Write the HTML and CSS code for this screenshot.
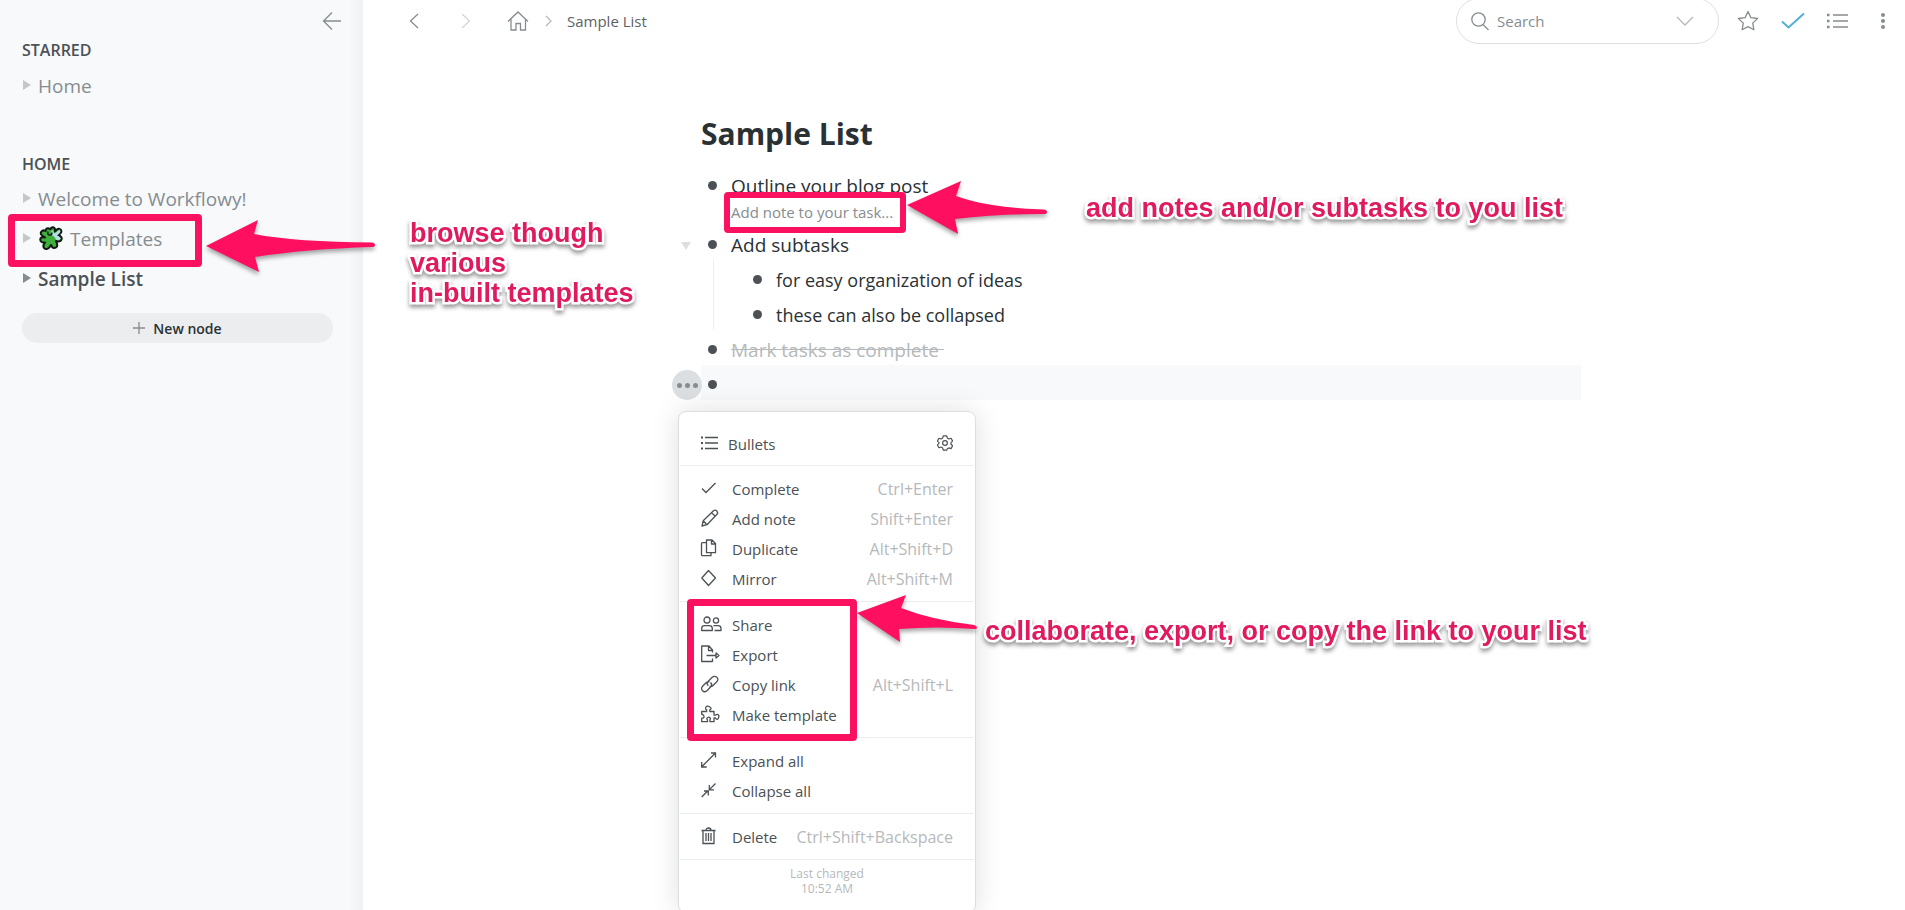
FILE: index.html
```html
<!DOCTYPE html>
<html lang="en">
<head>
<meta charset="utf-8">
<title>Sample List</title>
<link rel="stylesheet" href="styles.css">
</head>
<body>
<div class="app">
  <aside class="sidebar">
    <div class="sidebar-top">
      <button class="icon-btn" aria-label="Close sidebar">
        <svg width="20" height="20" viewBox="0 0 20 20"><path d="M19 10H2M10 1.500L1.500 10l8.500 8.500"/></svg>
      </button>
    </div>
    <h2 class="side-title">STARRED</h2>
    <nav class="side-nav starred" aria-label="Starred">
      <a class="side-link" href="#home"><span class="tri"></span>Home</a>
    </nav>
    <h2 class="side-title">HOME</h2>
    <nav class="side-nav" aria-label="Home">
      <a class="side-link" href="#welcome"><span class="tri"></span>Welcome to Workflowy!</a>
      <a class="side-link" href="#templates"><span class="tri"></span>
        <svg class="puzzle" width="24" height="24" viewBox="0 0 24 24"><path fill="#3fae3c" stroke="#101a12" stroke-width="2" stroke-linejoin="round" d="M6.500 5Q7 1.500 10 2.500Q12 4 12 2Q14.500 0 16 3L16 5.500Q19 1.500 21.500 3.500Q24 6.500 19 9Q23.500 10.500 22.500 13.500Q21.500 16.500 17 15Q19.500 20 17 21.500Q14 23.500 12 19Q9 24.500 5.500 22.500Q3 20 6 16.500Q1.500 17 1.200 13.500Q1.500 10.500 6 11.500Q0 8.500 2.500 5.500Q4 3.500 6.500 5Z"/><path fill="#b9dcea" stroke="none" d="M13 4l2.500 3.500q2.500-1.500 5-4q2.500 2.500-2.500 6q4 1.500 3.500 3.500q-2 2-4.500.5q-1-3-3.500-4q-2-3-.5-5.500z"/><path fill="none" stroke="#101a12" stroke-width="1.500" d="M9 5.500q-1 3.500 2 3.500q2 0 2-2.500"/></svg>
        Templates</a>
      <a class="side-link current" href="#sample"><span class="tri"></span>Sample List</a>
    </nav>
    <button class="new-node"><svg width="12" height="12" viewBox="0 0 12 12"><path d="M6 0v12M0 6h12"/></svg>New node</button>
  </aside>

  <main class="main">
    <header class="topbar">
      <button class="icon-btn back" aria-label="Back"><svg width="10" height="16" viewBox="0 0 10 16"><path d="M9 1L1.500 8 9 15"/></svg></button>
      <button class="icon-btn forward" aria-label="Forward"><svg width="10" height="16" viewBox="0 0 10 16"><path d="M1 1l7.500 7L1 15"/></svg></button>
      <nav class="crumbs" aria-label="Breadcrumb">
        <a href="#home" aria-label="Home"><svg width="22" height="20" viewBox="0 0 22 20"><path d="M1 10.500L11 1l10 9.500M4 8v11h5v-6.500h4.500V19h5V8"/></svg></a>
        <svg class="sep" width="7" height="12" viewBox="0 0 7 12"><path d="M1 1l5 5-5 5"/></svg>
        <a href="#sample">Sample List</a>
      </nav>
      <label class="search">
        <svg width="18" height="19" viewBox="0 0 18 19"><circle cx="7.500" cy="7.500" r="6.700"/><path d="M12 12.500l5.500 5.500"/></svg>
        <input type="text" placeholder="Search" aria-label="Search">
        <svg class="caret" width="18" height="10" viewBox="0 0 18 10"><path d="M1 1l8 8 8-8"/></svg>
      </label>
      <div class="actions">
        <button class="icon-btn" aria-label="Star"><svg width="22" height="22" viewBox="0 0 22 22"><path stroke-linejoin="round" d="M11 1.500l2.900 6.100 6.700.9-4.900 4.600 1.200 6.700L11 16.600l-5.900 3.200 1.200-6.700L1.400 8.500l6.700-.9z"/></svg></button>
        <button class="icon-btn done" aria-label="Show completed"><svg width="24" height="18" viewBox="0 0 24 18"><path d="M1 9.500l6.500 6L23 1.500"/></svg></button>
        <button class="icon-btn" aria-label="List view"><svg width="21" height="16" viewBox="0 0 21 16"><path d="M6 2h15M6 8h15M6 14h15"/><path stroke-width="2.500" d="M0 2h2.500M0 8h2.500M0 14h2.500"/></svg></button>
        <button class="icon-btn kebab" aria-label="More"><svg width="4" height="18" viewBox="0 0 4 18"><circle cx="2" cy="3" r="2"/><circle cx="2" cy="9" r="2"/><circle cx="2" cy="15" r="2"/></svg></button>
      </div>
    </header>

    <section class="page">
      <h1 class="page-title">Sample List</h1>
      <ul class="outline">
        <li><div class="row"><span class="dot"></span>Outline your blog post</div><p class="note">Add note to your task...</p></li>
        <li><div class="row"><span class="fold"></span><span class="dot"></span>Add subtasks</div>
          <ul class="children">
            <li><div class="row"><span class="dot"></span>for easy organization of ideas</div></li>
            <li><div class="row"><span class="dot"></span>these can also be collapsed</div></li>
          </ul>
        </li>
        <li><div class="row"><span class="dot"></span><s>Mark tasks as complete&nbsp;</s></div></li>
        <li class="active"><div class="row"><span class="dot"></span></div>
          <button class="more" aria-label="Item menu"><i></i><i></i><i></i></button>
          <div class="menu">
            <div class="group head">
              <button class="item"><svg width="18" height="14" viewBox="0 0 18 14"><path d="M4 1.500h13M4 7h13M4 12.500h13"/><path stroke-width="2" d="M0 1.500h2M0 7h2M0 12.500h2"/></svg>Bullets</button>
              <button class="gear" aria-label="Settings"><svg width="16" height="18" viewBox="0 0 18 18"><path stroke-linejoin="round" d="M7 1h4l.6 2.500 1.800 1 2.400-.8 1.800 3.200-1.900 1.700v1.800l1.900 1.700-1.800 3.200-2.400-.8-1.800 1L11 17H7l-.6-2.500-1.800-1-2.400.8-1.800-3.200 1.900-1.700V8.600L.4 6.900l1.800-3.200 2.400.8 1.800-1z"/><circle cx="9" cy="9" r="2.700"/></svg></button>
            </div>
            <div class="group">
              <button class="item"><svg width="18" height="18" viewBox="0 0 18 18"><path d="M1 9.500l4 4L14.500 4"/></svg>Complete<kbd>Ctrl+Enter</kbd></button>
              <button class="item"><svg width="18" height="18" viewBox="0 0 18 18"><path stroke-linejoin="round" d="M1 17l1.200-5.200L12.500 1.700q1.800-1.300 3.300.3t.2 3.300L6 15.700zM2.200 11.800l3.800 3.900M10.500 3.600l3.700 3.700"/></svg>Add note<kbd>Shift+Enter</kbd></button>
              <button class="item"><svg width="18" height="18" viewBox="0 0 18 18"><path stroke-linejoin="round" d="M5.500 1H11l3.500 3.500v9.200h-9zM10.500 1v4h4M5.500 3.700H1.500q-1 0-1 1v11q0 1 1 1h8.500v-3"/></svg>Duplicate<kbd>Alt+Shift+D</kbd></button>
              <button class="item"><svg width="18" height="18" viewBox="0 0 18 18"><path stroke-linejoin="round" d="M7.500 1.500L14.500 9l-7 7.500L.8 9z"/></svg>Mirror<kbd>Alt+Shift+M</kbd></button>
            </div>
            <div class="group">
              <button class="item"><svg class="wide" width="21" height="18" viewBox="0 0 21 18"><circle cx="6" cy="5" r="3"/><circle cx="15" cy="5.500" r="2.600"/><path stroke-linejoin="round" d="M.7 15.500v-2q0-2.800 3-2.800h4.600q3 0 3 2.800v2zM12.500 10.700h4.500q3 0 3 2.800v2h-6.500"/></svg>Share</button>
              <button class="item"><svg class="wide" width="21" height="18" viewBox="0 0 21 18"><path stroke-linejoin="round" d="M11.500 7.500V5L8 1H.7v15.500h10.800v-3M7.500 1v4.500h4M5.500 10.500h9.500M15 8l3 2.500-3 2.500z"/></svg>Export</button>
              <button class="item"><svg width="18" height="18" viewBox="0 0 18 18"><path d="M7.300 10.800Q5 8.500 7 6.500L11 2.500Q13.500.300 15.800 2.300T15.500 7l-3.500 3.500Q10.500 12 8.500 11.500M9.500 7.500q2.300 2 .3 4.300L6 15.700q-2.500 2-4.500 0T1.800 11L5 7.800Q6.500 6.500 8.500 7"/></svg>Copy link<kbd>Alt+Shift+L</kbd></button>
              <button class="item"><svg class="wide" width="21" height="18" viewBox="0 0 21 18"><path stroke-linejoin="round" d="M.7 6.500h5V4.800Q3.800 3.800 5 2t3.800 0 0 2.800v1.700H13v3.700h1.500q1.500-1.400 2.800-.5t0 3.500-2.800-.2H13v3.700H9v-2q1-1 0-2t-2.500 0 0 2v2H.7v-3.500H2q1.700-.9.800-2.400T.7 9z"/></svg>Make template</button>
            </div>
            <div class="group">
              <button class="item"><svg width="18" height="18" viewBox="0 0 18 18"><path d="M1 15.500L14 2.500M10 2h4.500v4.500M.7 11v5h5"/></svg>Expand all</button>
              <button class="item"><svg width="18" height="18" viewBox="0 0 18 18"><path d="M.7 16l6-6M14.500 2.500l-6 6M3 10h4.300v4.500M8.300 4v4.800H13"/></svg>Collapse all</button>
            </div>
            <div class="group">
              <button class="item"><svg width="18" height="18" viewBox="0 0 18 18"><path d="M.5 3.500h14M5 3.500q0-2.500 2.500-2.500T10 3.500M2 3.500V16.500h11V3.500M5 6v8M7.500 6v8M10 6v8"/></svg>Delete<kbd>Ctrl+Shift+Backspace</kbd></button>
            </div>
            <p class="changed">Last changed<br>10:52 AM</p>
          </div>
        </li>
      </ul>
    </section>
  </main>

  <div class="frame frame-templates"></div>
  <div class="frame frame-note"></div>
  <div class="frame frame-share"></div>
  <svg class="arrow arrow-templates" width="170" height="54" viewBox="0 0 170 54"><path d="M0 27L52 1L48 15Q90 23 166 23.500Q169 24 169 26T166 28Q100 30 49 38L53 53Z"/></svg>
  <svg class="arrow arrow-note" width="141" height="54" viewBox="0 0 141 54"><path d="M0 25L54 1L49 16Q82 28 137 29.500Q140 30 140 32T137 34Q90 34 48 39L51 54Z"/></svg>
  <svg class="arrow arrow-share" width="121" height="48" viewBox="0 0 121 48"><path d="M0 18L49 0L44 13Q75 25 117 30Q120 31 120 32.500T117 34Q80 31 42 34L43 47Z"/></svg>
  <p class="callout callout-templates">browse though<br>various<br>in-built templates</p>
  <p class="callout callout-note">add notes and/or subtasks to you list</p>
  <p class="callout callout-share">collaborate, export, or copy the link to your list</p>
</div>
</body>
</html>
```
FILE: styles.css
```css
* { box-sizing: border-box; }
body {
  margin: 0;
  font-family: "Open Sans", "Noto Sans", sans-serif;
  font-size: 15px;
  color: #2a3135;
  background: #fff;
}
h1, h2, p, ul { margin: 0; padding: 0; }
ul { list-style: none; }
a { color: inherit; text-decoration: none; }
button { font: inherit; color: inherit; background: none; border: 0; padding: 0; }
svg { fill: none; stroke: currentColor; stroke-width: 1.3; flex: none; }

.app { position: relative; display: flex; height: 100vh; overflow: hidden; }

.sidebar {
  width: 363px;
  flex: none;
  padding: 0 30px 0 22px;
  background: linear-gradient(to left, #eef0f2, #f7f9fb 14px);
}
.sidebar-top { display: flex; justify-content: flex-end; padding: 11px 0 0; margin-right: -9px; height: 38px; }
.icon-btn { display: flex; align-items: center; color: #868c90; }
.sidebar-top .icon-btn { height: 20px; }
.side-title { font-size: 16px; line-height: 24px; font-weight: 600; color: #4b5155; }
.side-nav { display: flex; flex-direction: column; }
.side-nav.starred { padding: 4px 0 46px; }
.side-nav:not(.starred) { padding-top: 3px; }
.side-link {
  display: flex;
  align-items: center;
  height: 40px;
  font-size: 19px;
  color: #868c90;
}
.tri {
  border: solid transparent;
  border-width: 5px 0 5px 8px;
  border-left-color: #c4c8ca;
  margin: -3px 7px 0 1px;
}
.puzzle { margin: -2px 7px 0 1px; }
.current { font-weight: 600; color: #4b5155; }
.current .tri { border-left-color: #868c90; }
.new-node {
  display: flex;
  align-items: center;
  justify-content: center;
  gap: 8px;
  width: 100%;
  height: 30px;
  margin-top: 14px;
  border-radius: 15px;
  background: #ecedef;
  font-size: 14px;
  font-weight: 600;
}
.new-node svg { color: #868c90; }

.main { flex: 1; min-width: 0; }
.topbar { display: flex; align-items: center; height: 42px; padding-right: 20px; color: #5c6367; }
.back { margin-left: 46px; }
.forward { margin-left: 42px; color: #d3d6d8; }
.crumbs { display: flex; align-items: center; margin-left: 36px; }
.crumbs a { display: flex; }
.crumbs svg { color: #868c90; }
.crumbs .sep { margin: 0 15px 0 16px; color: #b5b9bb; }
.search {
  display: flex;
  align-items: center;
  width: 263px;
  height: 46px;
  margin-left: auto;
  padding: 0 24px 0 14px;
  border: 1px solid #dcdfe1;
  border-radius: 23px;
  color: #868c90;
}
.search input {
  flex: 1;
  min-width: 0;
  margin-left: 8px;
  padding: 0;
  border: 0;
  outline: 0;
  background: none;
  font: inherit;
}
.search input::placeholder { color: #868c90; opacity: 1; }
.caret { color: #b5b9bb; }
.actions { display: flex; align-items: center; gap: 22px; margin-left: 18px; }
.done { color: #4fb0d6; }
.done svg { stroke-width: 2; }
.kebab { margin-left: 11px; }
.kebab svg { fill: currentColor; stroke: none; }

.page { max-width: 894px; margin: 0 auto; padding: 70px 0 0 14px; }
.page-title { font-size: 30px; line-height: 44px; font-weight: 700; }
.outline { padding-top: 10px; font-size: 19px; }
.row { position: relative; display: flex; align-items: center; height: 35px; padding: 5px 0 0 30px; }
.row .dot {
  position: absolute;
  left: 7px;
  top: 15px;
  width: 9px;
  height: 9px;
  border-radius: 50%;
  background: #4b5155;
}
.fold {
  position: absolute;
  left: -20px;
  top: 17px;
  border: solid transparent;
  border-width: 8px 5px 0;
  border-top-color: #dcdfe1;
}
.note { height: 24px; padding-left: 30px; font-size: 15px; line-height: 22px; color: #868c90; }
.children { margin-left: 12px; padding-left: 32px; border-left: 1px solid #ecedef; font-size: 18px; }
.outline s { color: #b5b9bb; }
.active { position: relative; background: #f7f9fb; }
.more {
  position: absolute;
  left: -29px;
  top: 5px;
  display: flex;
  align-items: center;
  justify-content: center;
  gap: 3px;
  width: 30px;
  height: 30px;
  border-radius: 50%;
  background: #dcdfe1;
}
.more i { width: 5px; height: 5px; border-radius: 50%; background: #868c90; }

.menu {
  position: absolute;
  left: -23px;
  top: 46px;
  width: 298px;
  border: 1px solid #dcdfe1;
  border-radius: 8px;
  background: #fff;
  box-shadow: 0 0 28px rgba(0, 0, 0, 0.13);
  font-size: 15px;
  color: #4b5155;
}
.group { margin: 0 1px; padding: 8px 21px 7px; border-bottom: 1px solid #ecedef; }
.item { display: flex; align-items: center; width: 100%; height: 30px; text-align: left; }
.item svg { width: 18px; margin: -2px 13px 0 0; overflow: visible; }
.item svg.wide { width: 21px; margin-right: 10px; }
.item kbd { margin-left: auto; font: inherit; font-size: 16px; line-height: 20px; color: #b5b9bb; }
.head { display: flex; align-items: center; padding: 17px 21px 6px; }
.head .item svg { margin-right: 9px; }
.gear { display: flex; margin-top: -3px; }
.changed { padding: 6px 0 16px; text-align: center; font-size: 12px; line-height: 15px; color: #b5b9bb; }

.frame { position: absolute; border: 7px solid #fa1160; border-radius: 4px; }
.frame-templates { left: 8px; top: 214px; width: 194px; height: 53px; }
.frame-note { left: 724px; top: 192px; width: 182px; height: 41px; border-width: 6px; }
.frame-share { left: 687px; top: 599px; width: 170px; height: 142px; }
.arrow { position: absolute; fill: #ff0f5f; stroke: none; overflow: visible; filter: drop-shadow(0 3px 2px rgba(0, 0, 0, 0.35)); }
.arrow-templates { left: 206px; top: 219px; }
.arrow-note { left: 907px; top: 180px; }
.arrow-share { left: 857px; top: 595px; }
.callout {
  position: absolute;
  font: bold 27px/30px "Liberation Sans", Arial, sans-serif;
  color: #e01a5e;
  white-space: nowrap;
  -webkit-text-stroke: 5px #fff;
  paint-order: stroke fill;
  stroke-linejoin: round;
  filter: drop-shadow(0 3px 2px rgba(0, 0, 0, 0.4));
}
.callout-templates { left: 410px; top: 218px; }
.callout-note { left: 1086px; top: 193px; }
.callout-share { left: 985px; top: 616px; }
```
